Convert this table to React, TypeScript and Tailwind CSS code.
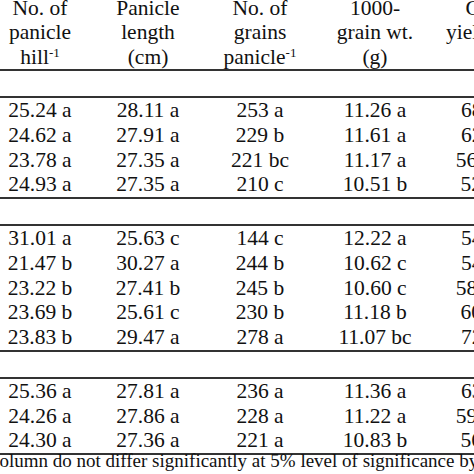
const groups: string[][][] = [
  [
    ["25.24 a", "28.11 a", "253 a", "11.26 a", "6843 a"],
    ["24.62 a", "27.91 a", "229 b", "11.61 a", "6217 a"],
    ["23.78 a", "27.35 a", "221 bc", "11.17 a", "5691 ab"],
    ["24.93 a", "27.35 a", "210 c", "10.51 b", "5234 b"],
  ],
  [
    ["31.01 a", "25.63 c", "144 c", "12.22 a", "5420 c"],
    ["21.47 b", "30.27 a", "244 b", "10.62 c", "5442 c"],
    ["23.22 b", "27.41 b", "245 b", "10.60 c", "5812 bc"],
    ["23.69 b", "25.61 c", "230 b", "11.18 b", "6045 b"],
    ["23.83 b", "29.47 a", "278 a", "11.07 bc", "7230 a"],
  ],
  [
    ["25.36 a", "27.81 a", "236 a", "11.36 a", "6352 a"],
    ["24.26 a", "27.86 a", "228 a", "11.22 a", "5917 ab"],
    ["24.30 a", "27.36 a", "221 a", "10.83 b", "5648 b"],
  ],
];

const cols = "grid grid-cols-[80px_136px_88px_142px_88px] text-center";

function Rule() {
  return <div className="h-[2px] w-full bg-[#333]" />;
}

function Sup({ children }: { children: string }) {
  return <sup className="text-[13px]">{children}</sup>;
}

export default function App() {
  return (
    <div
      className="w-[474px] h-[474px] overflow-hidden bg-white text-[#111]"
      style={{ fontFamily: '"Liberation Serif", "Times New Roman", serif' }}
    >
      <div className="w-[534px] mt-[-4.5px] text-[21.5px]">
        <div className={`${cols} leading-[24.5px] h-[73.5px] whitespace-nowrap`}>
          <div>
            No. of
            <br />
            panicle
            <br />
            hill<Sup>-1</Sup>
          </div>
          <div>
            Panicle
            <br />
            length
            <br />
            (cm)
          </div>
          <div>
            No. of
            <br />
            grains
            <br />
            panicle<Sup>-1</Sup>
          </div>
          <div>
            1000-
            <br />
            grain wt.
            <br />
            (g)
          </div>
          <div>
            Grain
            <br />
            yield (t ha<Sup>-1</Sup>)
          </div>
        </div>
        <Rule />
        {groups.map((rows, g) => (
          <div key={g}>
            <div className="h-[25px]" />
            <Rule />
            {rows.map((r, i) => (
              <div key={i} className={`${cols} h-[24.75px] leading-[25px] whitespace-nowrap`}>
                {r.map((c, j) => (
                  <div key={j}>{c}</div>
                ))}
              </div>
            ))}
            <Rule />
          </div>
        ))}
        <p className="text-[19px] leading-[12px] whitespace-nowrap ml-[-9px]">
          column do not differ significantly at 5% level of significance by DMRT
        </p>
      </div>
    </div>
  );
}
